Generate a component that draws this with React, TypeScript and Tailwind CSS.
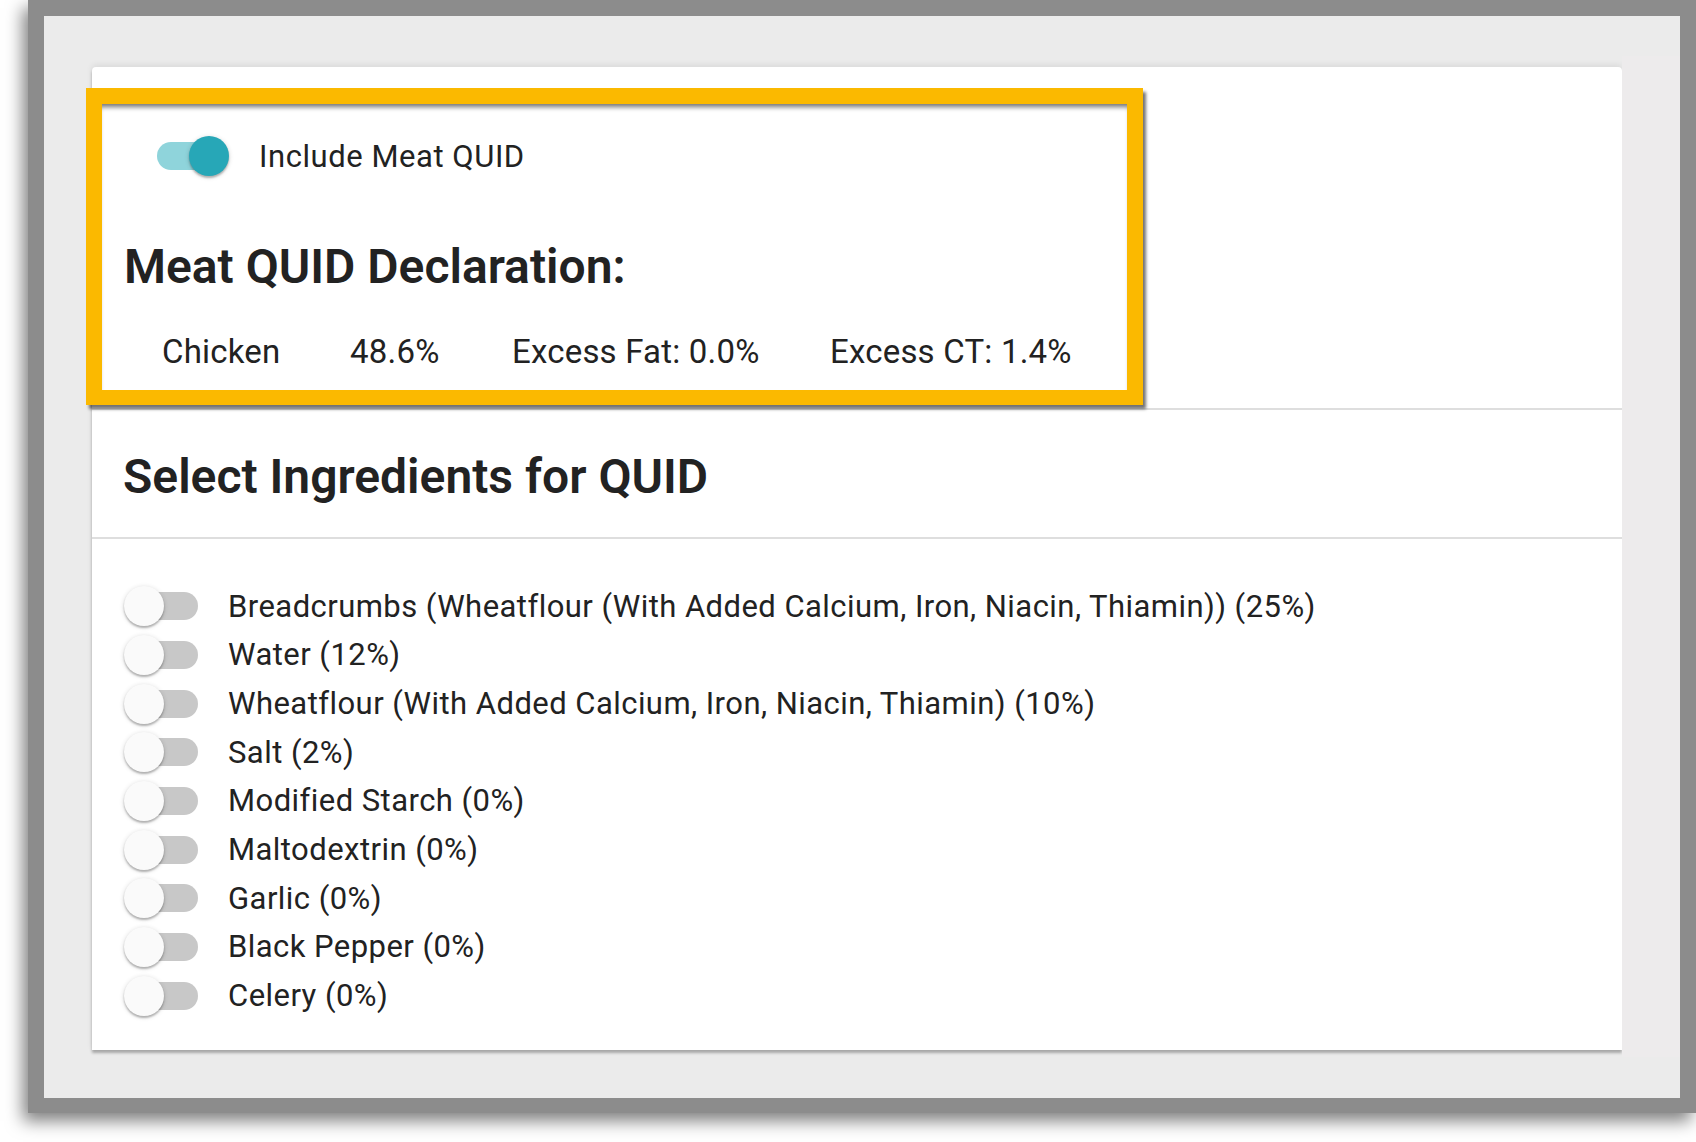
import React from "react";

const ingredients = [
  "Breadcrumbs (Wheatflour (With Added Calcium, Iron, Niacin, Thiamin)) (25%)",
  "Water (12%)",
  "Wheatflour (With Added Calcium, Iron, Niacin, Thiamin) (10%)",
  "Salt (2%)",
  "Modified Starch (0%)",
  "Maltodextrin (0%)",
  "Garlic (0%)",
  "Black Pepper (0%)",
  "Celery (0%)",
];

function Switch({ on }: { on: boolean }) {
  return (
    <div className="relative w-[116px] h-full shrink-0">
      <div
        className={
          "absolute left-[24px] top-1/2 -translate-y-1/2 w-[68px] h-[28px] rounded-full " +
          (on ? "bg-[#8fd4db]" : "bg-[#c8c8c8]")
        }
      />
      <div
        className={
          "absolute top-1/2 -translate-y-1/2 w-[40px] h-[40px] rounded-full shadow-[0_2px_2px_rgba(0,0,0,0.24),0_1px_5px_rgba(0,0,0,0.16)] " +
          (on ? "left-[56px] bg-[#27a7b7]" : "left-[18px] bg-[#fafafa]")
        }
      />
    </div>
  );
}

export default function App() {
  return (
    <div
      className="w-[1696px] h-[1142px] bg-white overflow-hidden text-[#222222]"
      style={{ fontFamily: "Roboto, 'Noto Sans', sans-serif" }}
    >
      <div className="ml-[28px] w-[1668px] h-[1113px] bg-[#8c8c8c] pt-[16px] pl-[16px] shadow-[-5px_8px_16px_rgba(0,0,0,0.5)]">
        <div className="w-[1636px] h-[1082px] bg-[#ebebeb] flex">
          <div className="ml-[48px] mt-[51px] w-[1530px] h-[983px] bg-white rounded-t-[4px] shadow-[0_-2px_6px_rgba(0,0,0,0.08),0_3px_3px_rgba(0,0,0,0.28)] flex flex-col">
            {/* Top section with highlighted QUID declaration */}
            <div className="h-[343px] pt-[21px] border-b-2 border-[#dedede] shrink-0">
              <div className="-ml-[6px] w-[1057px] h-[317px] border-[16px] border-b-[15px] border-[#fbb900] bg-white shadow-[3px_4px_3px_rgba(0,0,0,0.55),inset_0_6px_5px_-3px_rgba(0,0,0,0.55)] flex flex-col">
                <div className="h-[76px] mt-[14px] flex items-center pl-[31px]">
                  <Switch on={true} />
                  <span className="ml-[10px] text-[31px] leading-none tracking-[0.55px]">
                    Include Meat QUID
                  </span>
                </div>
                <div className="mt-[49px] pl-[22px] text-[48px] font-semibold leading-none tracking-[0px]">
                  Meat QUID Declaration:
                </div>
                <div className="mt-[44px] pl-[60px] flex text-[33px] leading-none tracking-[0.2px]">
                  <span className="w-[188px]">Chicken</span>
                  <span className="w-[162px]">48.6%</span>
                  <span className="w-[318px]">Excess Fat: 0.0%</span>
                  <span>Excess CT: 1.4%</span>
                </div>
              </div>
            </div>

            {/* Select Ingredients heading */}
            <div className="h-[129px] pt-[7px] border-b-2 border-[#dedede] flex items-center pl-[31px] shrink-0">
              <h2 className="text-[48px] font-semibold leading-none tracking-[0px]">
                Select Ingredients for QUID
              </h2>
            </div>

            {/* Ingredient list */}
            <div className="pt-[43px] pl-[14px] flex flex-col">
              {ingredients.map((name) => (
                <div key={name} className="h-[48.66px] flex items-center">
                  <Switch on={false} />
                  <span className="ml-[6px] text-[31px] leading-none tracking-[0.45px]">
                    {name}
                  </span>
                </div>
              ))}
            </div>
          </div>
          <div className="mt-[40px] w-[58px] h-[1001px] bg-[#edebec]" />
        </div>
      </div>
    </div>
  );
}
